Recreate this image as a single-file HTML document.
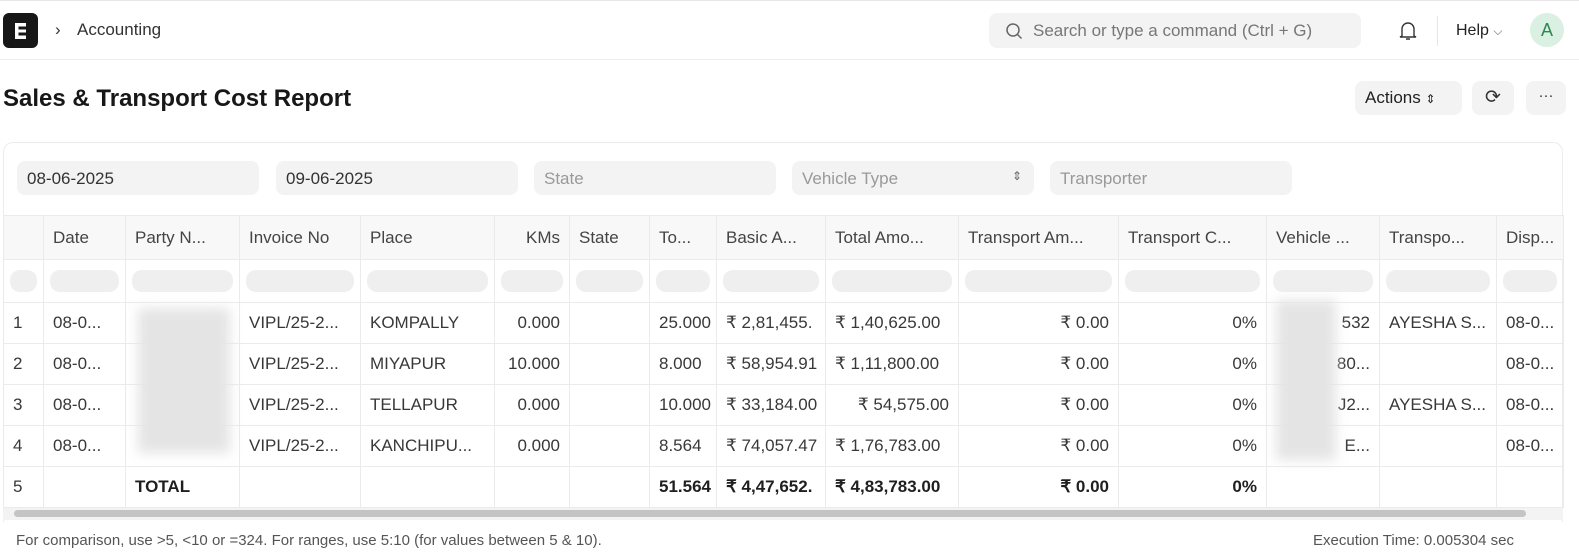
<!DOCTYPE html>
<html style="width:1579px;height:558px;overflow:hidden"><head><meta charset="utf-8"><style>
*{box-sizing:border-box;margin:0;padding:0}
body{width:1579px;height:558px;overflow:hidden;background:#fff;font-family:"Liberation Sans",sans-serif;color:#1f1f1f;position:relative}
.abs{position:absolute}
.nav{left:0;top:0;width:1579px;height:60px;border-bottom:1px solid #ededed;border-top:1px solid #e6e6e6}
.logo{left:3px;top:13px;width:35px;height:35px;background:#171717;border-radius:6px}
.inp{background:#f3f3f3;border-radius:8px;height:34px;font-size:17px;color:#999;padding:8px 10px}
table{border-collapse:collapse;table-layout:fixed;font-size:17px}
td{border:1px solid #ebebeb;white-space:nowrap;overflow:hidden;padding:0 9px;color:#383838}
tr.h td{height:44px;background:#f8f8f8;color:#444}
tr.f td{height:43px}
tr.d td{height:41px}
.pill{height:22px;background:#efefef;border-radius:10px}
.r{text-align:right}
.b{font-weight:bold;color:#1f1f1f}
.blur{background:#e4e4e4;filter:blur(6px)}
</style></head><body>
<div class="abs nav"></div>
<div class="abs logo"><svg width="35" height="35"><path d="M12 10h11v3.5h-7.5v3h7.5v3h-7.5v3h7.5v3.5H12z" fill="#fff"/></svg></div>
<div class="abs" style="left:55px;top:20px;font-size:17px;color:#333">›</div>
<div class="abs" style="left:77px;top:20px;font-size:17px;color:#333">Accounting</div>
<div class="abs inp" style="left:989px;top:13px;width:372px;height:35px;padding:8px 44px;color:#777">Search or type a command (Ctrl + G)</div>
<svg class="abs" style="left:1005px;top:22px" width="18" height="18"><circle cx="8" cy="8" r="6" stroke="#666" stroke-width="1.5" fill="none"/><path d="M12.5 12.5l4 4" stroke="#666" stroke-width="1.5"/></svg>
<svg class="abs" style="left:1398px;top:20px" width="20" height="22"><path d="M4 16V9a6 6 0 0 1 12 0v7l2 1H2z M8 19h4" stroke="#333" stroke-width="1.4" fill="none"/></svg>
<div class="abs" style="left:1437px;top:16px;width:1px;height:30px;background:#e6e6e6"></div>
<div class="abs" style="left:1456px;top:22px;font-size:16px;color:#222">Help <span style="font-size:12px;color:#666">⌵</span></div>
<div class="abs" style="left:1530px;top:13px;width:34px;height:34px;border-radius:50%;background:#d9f0e2;color:#2a8a4f;font-size:18px;text-align:center;line-height:34px">A</div>
<div class="abs" style="left:3px;top:85px;font-size:24px;font-weight:bold;color:#171717">Sales &amp; Transport Cost Report</div>
<div class="abs" style="left:1355px;top:81px;width:107px;height:34px;background:#f3f3f3;border-radius:8px;font-size:17px;padding:7px 10px;color:#222">Actions <span style="font-size:12px">⇕</span></div>
<div class="abs" style="left:1472px;top:81px;width:42px;height:34px;background:#f3f3f3;border-radius:8px;text-align:center;font-size:19px;line-height:34px;color:#333">⟳</div>
<div class="abs" style="left:1526px;top:81px;width:40px;height:34px;background:#f3f3f3;border-radius:8px;text-align:center;font-size:15px;line-height:30px;color:#333">···</div>
<div class="abs" style="left:3px;top:142px;width:1560px;height:380px;border:1px solid #ececec;border-bottom:none;border-radius:10px 10px 0 0"></div>
<div class="abs inp" style="left:17px;top:161px;width:242px;color:#333">08-06-2025</div>
<div class="abs inp" style="left:276px;top:161px;width:242px;color:#333">09-06-2025</div>
<div class="abs inp" style="left:534px;top:161px;width:242px">State</div>
<div class="abs inp" style="left:792px;top:161px;width:242px">Vehicle Type<span style="position:absolute;right:12px;font-size:12px;color:#666">⇕</span></div>
<div class="abs inp" style="left:1050px;top:161px;width:242px">Transporter</div>
<table class="abs" style="left:3px;top:215px;width:1560px">
<colgroup><col style="width:40px"><col style="width:82px"><col style="width:114px"><col style="width:121px"><col style="width:134px"><col style="width:75px"><col style="width:80px"><col style="width:67px"><col style="width:109px"><col style="width:133px"><col style="width:160px"><col style="width:148px"><col style="width:113px"><col style="width:117px"><col style="width:67px"></colgroup>
<tr class="h"><td></td><td>Date</td><td>Party N...</td><td>Invoice No</td><td>Place</td><td class="r">KMs</td><td>State</td><td>To...</td><td>Basic A...</td><td>Total Amo...</td><td>Transport Am...</td><td>Transport C...</td><td>Vehicle ...</td><td>Transpo...</td><td>Disp...</td></tr>
<tr class="f"><td style="padding:0 6px"><div class="pill"></div></td><td style="padding:0 6px"><div class="pill"></div></td><td style="padding:0 6px"><div class="pill"></div></td><td style="padding:0 6px"><div class="pill"></div></td><td style="padding:0 6px"><div class="pill"></div></td><td style="padding:0 6px"><div class="pill"></div></td><td style="padding:0 6px"><div class="pill"></div></td><td style="padding:0 6px"><div class="pill"></div></td><td style="padding:0 6px"><div class="pill"></div></td><td style="padding:0 6px"><div class="pill"></div></td><td style="padding:0 6px"><div class="pill"></div></td><td style="padding:0 6px"><div class="pill"></div></td><td style="padding:0 6px"><div class="pill"></div></td><td style="padding:0 6px"><div class="pill"></div></td><td style="padding:0 6px"><div class="pill"></div></td></tr>
<tr class="d"><td>1</td><td>08-0...</td><td></td><td>VIPL/25-2...</td><td>KOMPALLY</td><td class="r">0.000</td><td></td><td>25.000</td><td>₹ 2,81,455.</td><td>₹ 1,40,625.00</td><td class="r">₹ 0.00</td><td class="r">0%</td><td class="r">532</td><td>AYESHA S...</td><td>08-0...</td></tr>
<tr class="d"><td>2</td><td>08-0...</td><td></td><td>VIPL/25-2...</td><td>MIYAPUR</td><td class="r">10.000</td><td></td><td>8.000</td><td>₹ 58,954.91</td><td>₹ 1,11,800.00</td><td class="r">₹ 0.00</td><td class="r">0%</td><td class="r">80...</td><td></td><td>08-0...</td></tr>
<tr class="d"><td>3</td><td>08-0...</td><td></td><td>VIPL/25-2...</td><td>TELLAPUR</td><td class="r">0.000</td><td></td><td>10.000</td><td>₹ 33,184.00</td><td class="r">₹ 54,575.00</td><td class="r">₹ 0.00</td><td class="r">0%</td><td class="r">J2...</td><td>AYESHA S...</td><td>08-0...</td></tr>
<tr class="d"><td>4</td><td>08-0...</td><td></td><td>VIPL/25-2...</td><td>KANCHIPU...</td><td class="r">0.000</td><td></td><td>8.564</td><td>₹ 74,057.47</td><td>₹ 1,76,783.00</td><td class="r">₹ 0.00</td><td class="r">0%</td><td class="r">E...</td><td></td><td>08-0...</td></tr>
<tr class="d"><td>5</td><td></td><td class="b">TOTAL</td><td></td><td></td><td></td><td></td><td class="b">51.564</td><td class="b">₹ 4,47,652.</td><td class="b">₹ 4,83,783.00</td><td class="b r">₹ 0.00</td><td class="b r">0%</td><td></td><td></td><td></td></tr>
</table>
<div class="abs blur" style="left:138px;top:308px;width:92px;height:145px"></div>
<div class="abs blur" style="left:1276px;top:300px;width:60px;height:160px"></div>
<div class="abs" style="left:3px;top:508px;width:1560px;height:12px;background:#f3f3f3"></div>
<div class="abs" style="left:14px;top:510px;width:1512px;height:7px;background:#c4c4c4;border-radius:4px"></div>
<div class="abs" style="left:16px;top:532px;font-size:15px;color:#555">For comparison, use &gt;5, &lt;10 or =324. For ranges, use 5:10 (for values between 5 &amp; 10).</div>
<div class="abs" style="left:1313px;top:532px;font-size:15px;color:#555">Execution Time: 0.005304 sec</div>
</body></html>
